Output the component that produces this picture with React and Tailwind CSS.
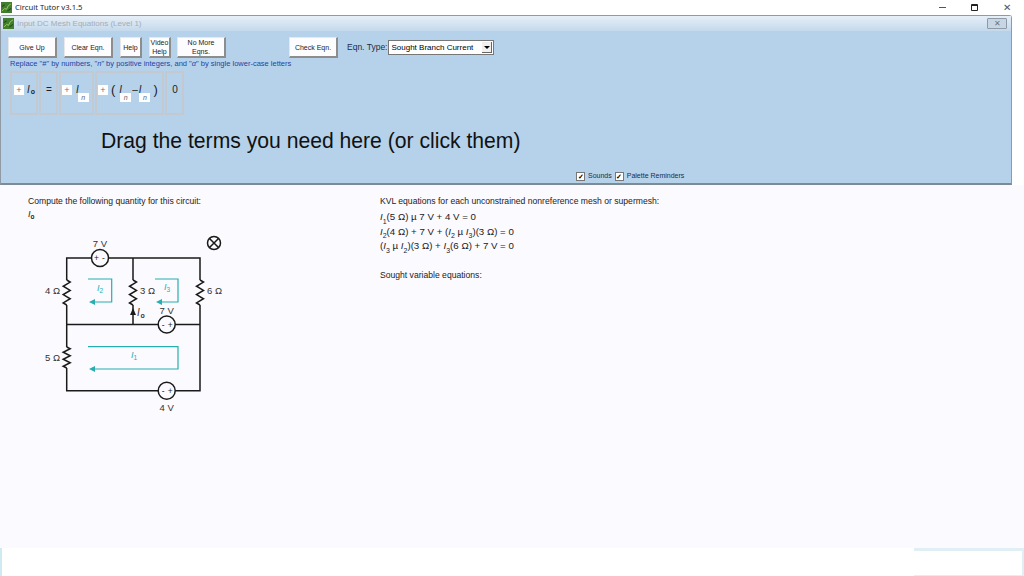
import React from "react";

const AppIcon = ({ size }) => (
  <svg width={size} height={size} viewBox="0 0 12 12" className="shrink-0">
    <rect width="12" height="12" fill="#3f7f2f" />
    <path d="M1 10 L4 7 L6 8 L8 4 L11 2" stroke="#a4d05a" strokeWidth="1" fill="none" />
    <path d="M1 5 L4 3 M7 10 L11 7" stroke="#1f4f1a" strokeWidth="1.2" fill="none" />
  </svg>
);

const Btn = ({ w, children }) => (
  <div
    className={`${w} h-[21px] bg-[#fdfdff] border-r-2 border-b-2 border-t border-l border-r-[#8d8d8d] border-b-[#8d8d8d] border-t-[#e8e8e8] border-l-[#e8e8e8] flex items-center justify-center text-center text-[7px] leading-[9px] text-[#222]`}
  >
    <span>{children}</span>
  </div>
);

const Plus = () => (
  <span className="w-[10px] h-[10px] shrink-0 bg-white flex items-center justify-center text-[9px] leading-none text-[#777]">
    +
  </span>
);

const Sub = () => (
  <span className="w-[11px] h-[9px] shrink-0 bg-white flex items-center justify-center text-[7px] italic leading-none text-[#667]">
    n
  </span>
);

const TermBox = ({ w, children }) => (
  <div className={`${w} h-[44px] border-2 border-[#c3c9cf] flex items-start pt-[12px] pl-[1px] text-[10px] leading-[10px] text-[#222]`}>
    {children}
  </div>
);

const Check = ({ label }) => (
  <div className="flex items-center gap-[3px]">
    <span className="w-[9px] h-[9px] bg-white border border-[#777] flex items-center justify-center text-[7px] leading-none text-black font-bold">
      ✓
    </span>
    <span className="text-[7px] text-[#1c2c4c]">{label}</span>
  </div>
);

const Cur = ({ n }) => (
  <>
    <i>I</i>
    <sub className="text-[7px] align-[-2px] leading-none">{n}</sub>
  </>
);

const Zig = ({ x, y, h = 24 }) => {
  const s = h / 6;
  return (
    <path
      d={`M${x} ${y} l3.5 ${s / 2} l-7 ${s} l7 ${s} l-7 ${s} l7 ${s} l-7 ${s} l3.5 ${s / 2}`}
      fill="none"
      stroke="#1a1a1a"
      strokeWidth="1.5"
    />
  );
};

const Source = ({ cx, cy, left, right }) => (
  <g>
    <circle cx={cx} cy={cy} r="8.5" fill="#fbfaff" stroke="#1a1a1a" strokeWidth="1.5" />
    <text x={cx - 3.5} y={cy + 3} fontSize="8.5" textAnchor="middle" fill="#222">{left}</text>
    <text x={cx + 3.5} y={cy + 3} fontSize="8.5" textAnchor="middle" fill="#222">{right}</text>
  </g>
);

const Loop = ({ x1, x2, y1, y2 }) => (
  <g>
    <path d={`M${x1} ${y1} H${x2} V${y2} H${x1 + 5}`} fill="none" stroke="#27aeb0" strokeWidth="1.2" />
    <path d={`M${x1 + 1} ${y2} l6 -3 v6 z`} fill="#27aeb0" />
  </g>
);

const Circuit = () => (
  <svg width="200" height="190" viewBox="28 232 200 190" fontFamily="Liberation Sans, sans-serif" className="mt-[10px]">
    <path
      d="M66.7 280 V258 H200 V280 M66.7 305 V390.7 H200 V305 M133 258 V280 M133 305 V324.5 M66.7 324.5 H200"
      fill="none"
      stroke="#1a1a1a"
      strokeWidth="1.5"
    />
    <rect x="60" y="347" width="14" height="21" fill="#fbfaff" />
    <Zig x={66.7} y={280} h={25} />
    <Zig x={133} y={280} h={25} />
    <Zig x={200} y={280} h={25} />
    <Zig x={66.7} y={347} h={21} />
    <Source cx={100} cy={258} left="+" right="-" />
    <Source cx={166.7} cy={324.5} left="-" right="+" />
    <Source cx={166.7} cy={390.7} left="-" right="+" />
    <path d="M133 308 l-3 7 h6 z" fill="#1a1a1a" />
    <Loop x1={88} x2={111.7} y1={279} y2={302} />
    <Loop x1={155} x2={178} y1={279} y2={302} />
    <Loop x1={88} x2={178} y1={346.7} y2={369} />
    <g stroke="#1a1a1a" strokeWidth="1.5" fill="none">
      <circle cx="214" cy="243" r="6.5" />
      <path d="M209.5 238.5 L218.5 247.5 M218.5 238.5 L209.5 247.5" />
    </g>
    <g fontSize="9.5" fill="#333">
      <text x="100" y="247" textAnchor="middle">7 V</text>
      <text x="45" y="294">4 Ω</text>
      <text x="140" y="294">3 Ω</text>
      <text x="207" y="294">6 Ω</text>
      <text x="45" y="361">5 Ω</text>
      <text x="166.7" y="314" textAnchor="middle">7 V</text>
      <text x="166.7" y="411" textAnchor="middle">4 V</text>
      <text x="137" y="316" fontStyle="italic" fontSize="10">I</text>
      <text x="140.5" y="318" fontSize="7" fontWeight="bold">o</text>
    </g>
    <g fontSize="9" fill="#27aeb0" fontStyle="italic">
      <text x="97" y="291">I<tspan fontSize="6.5" dy="1.5" fontStyle="normal">2</tspan></text>
      <text x="164" y="290">I<tspan fontSize="6.5" dy="1.5" fontStyle="normal">3</tspan></text>
      <text x="131" y="358">I<tspan fontSize="6.5" dy="1.5" fontStyle="normal">1</tspan></text>
    </g>
  </svg>
);

export default function App() {
  return (
    <div className="w-[1024px] h-[576px] overflow-hidden bg-white flex flex-col font-['Liberation_Sans',sans-serif]">
      <div className="h-[15px] flex items-center shrink-0">
        <div className="pl-[1px] flex items-center gap-[3px] flex-1">
          <AppIcon size={11} />
          <span className="text-[7.7px] text-[#222] font-['Noto_Sans',sans-serif]">Circuit Tutor v3.1.5</span>
        </div>
        <div className="flex items-center gap-[25px] pr-[13px]">
          <div className="w-[7px] h-px bg-[#555]" />
          <div className="w-[7px] h-[7px] border border-[#222] border-t-2 rounded-[1px]" />
          <span className="text-[10px] leading-none text-[#555]">✕</span>
        </div>
      </div>

      <div className="w-[1012px] h-[170px] shrink-0 border border-[#8f9aa5] border-b-2 border-b-[#7f8b94] rounded-t-[3px] flex flex-col bg-[#b5d2ea]">
        <div className="h-[15px] shrink-0 bg-gradient-to-b from-[#e6eff7] to-[#c4d9ec] flex items-center pl-[2px] pr-[4px] gap-[3px]">
          <AppIcon size={11} />
          <span className="text-[8px] text-[#a5adb5] flex-1">Input DC Mesh Equations (Level 1)</span>
          <div className="w-[20px] h-[11px] border border-[#8f9aa5] bg-[#c6d6e4] rounded-[1px] flex items-center justify-center text-[8px] leading-none text-[#6c7680]">
            ✕
          </div>
        </div>

        <div className="flex-1 pl-[7px] pt-[6px] flex flex-col">
          <div className="flex items-center">
            <Btn w="w-[49px]">Give Up</Btn>
            <div className="w-[7px]" />
            <Btn w="w-[49px]">Clear Eqn.</Btn>
            <div className="w-[7px]" />
            <Btn w="w-[22px]">Help</Btn>
            <div className="w-[7px]" />
            <Btn w="w-[22px]">Video<br />Help</Btn>
            <div className="w-[6px]" />
            <Btn w="w-[49px]">No More<br />Eqns.</Btn>
            <div className="ml-[63px] flex items-center gap-[9px]">
              <Btn w="w-[49px]">Check Eqn.</Btn>
              <div className="flex items-center gap-[1px]">
                <span className="text-[8.5px] text-[#1c2c4c]">Eqn. Type:</span>
                <div className="w-[106px] h-[15px] bg-white border border-[#777] flex items-center justify-between pl-[2px] pr-[1px]">
                  <span className="text-[8px] text-black">Sought Branch Current</span>
                  <div className="w-[10px] h-[11px] bg-[#f0f0f0] border-r border-b border-[#666] flex items-center justify-center">
                    <div className="w-0 h-0 border-l-[3px] border-r-[3px] border-t-[3px] border-l-transparent border-r-transparent border-t-black" />
                  </div>
                </div>
              </div>
            </div>
          </div>

          <div className="mt-[1px] pl-[2px] text-[7.5px] leading-[9px] text-[#2344a4]">
            Replace "#" by numbers, "<i>n</i>" by positive integers, and "<i>α</i>" by single lower-case letters
          </div>

          <div className="mt-[3px] ml-[2px] flex gap-[1px]">
            <TermBox w="w-[28px]">
              <div className="flex items-center gap-[3px] pl-[1px]">
                <Plus />
                <i>I</i>
                <span className="text-[7px] font-bold -mb-[4px] -ml-[2px]">o</span>
              </div>
            </TermBox>
            <TermBox w="w-[19px]">
              <span className="w-full text-center">=</span>
            </TermBox>
            <TermBox w="w-[35px]">
              <div className="flex">
                <Plus />
                <i className="ml-[4px]">I</i>
                <div className="mt-[8px] ml-[-1px]"><Sub /></div>
              </div>
            </TermBox>
            <TermBox w="w-[69px]">
              <div className="flex">
                <Plus />
                <span className="ml-[3px] text-[13px] leading-[10px]">(</span>
                <i className="ml-[4px]">I</i>
                <div className="mt-[8px] ml-[-2px]"><Sub /></div>
                <span className="ml-[1px]">–</span>
                <i className="ml-[1px]">I</i>
                <div className="mt-[8px] ml-[-2px]"><Sub /></div>
                <span className="ml-[3px] text-[13px] leading-[10px]">)</span>
              </div>
            </TermBox>
            <TermBox w="w-[19px]">
              <span className="w-full text-center">0</span>
            </TermBox>
          </div>

          <div className="mt-[14px] pl-[93px] text-[21.15px] leading-[24px] text-[#111]">
            Drag the terms you need here (or click them)
          </div>

          <div className="mt-[18px] pl-[568px] flex gap-[3px]">
            <Check label="Sounds" />
            <Check label="Palette Reminders" />
          </div>
        </div>
      </div>

      <div className="flex-1 bg-[#fbfaff] flex pl-[28px] pt-[11px] text-[8.6px] text-[#222]">
        <div className="w-[352px]">
          <div className="leading-[10px]">Compute the following quantity for this circuit:</div>
          <div className="mt-[3px] leading-[10px] text-[9px]">
            <i>I</i><span className="text-[6.5px] font-bold align-[-2px]">o</span>
          </div>
          <Circuit />
        </div>
        <div>
          <div className="leading-[10px]">KVL equations for each unconstrained nonreference mesh or supermesh:</div>
          <div className="mt-[4px] leading-[14.5px] text-[9.7px]">
            <div><Cur n="1" />(5 Ω) µ 7 V + 4 V = 0</div>
            <div><Cur n="2" />(4 Ω) + 7 V + (<Cur n="2" /> µ <Cur n="3" />)(3 Ω) = 0</div>
            <div>(<Cur n="3" /> µ <Cur n="2" />)(3 Ω) + <Cur n="3" />(6 Ω) + 7 V = 0</div>
          </div>
          <div className="mt-[16px] leading-[10px]">Sought variable equations:</div>
        </div>
      </div>

      <div className="h-[28px] shrink-0 flex bg-white">
        <div className="w-[2px] bg-[#cfeaf2]" />
        <div className="flex-1" />
        <div className="w-[110px] border-t-[3px] border-b border-r-2 border-[#e0eef6]" />
      </div>
    </div>
  );
}
